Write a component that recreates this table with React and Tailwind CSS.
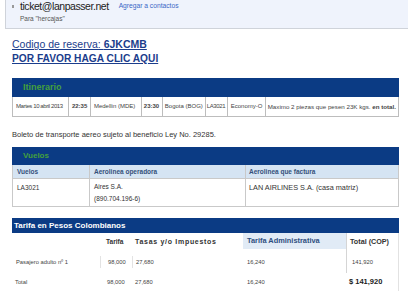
import React from "react";

const itinerario = [
    { text: "Martes 10 abril 2013", w: "w-[56px]", cls: "px-[3px] tracking-[-0.4px]" },
    { text: "22:35", w: "w-[22px]", cls: "px-[3px] font-bold" },
    { text: "Medellin (MDE)", w: "w-[51px]", cls: "px-[3px]" },
    { text: "23:30", w: "w-[21px]", cls: "px-[2px] font-bold" },
    { text: "Bogota (BOG)", w: "w-[43px]", cls: "px-[2px]" },
    { text: "LA3021", w: "w-[22px]", cls: "px-[1px] tracking-[-0.4px]" },
    { text: "Economy-O", w: "w-[38px]", cls: "px-[3px]" },
];

const BlueBar = ({ children, className }) => (
    <div className={`flex items-center bg-[#0b3b84] ${className}`}>{children}</div>
);

const App = () => {
    return (
        <div className="w-[408px] h-[291px] overflow-hidden bg-white text-[#333] font-['Liberation_Sans',Arial,sans-serif]">
            {/* mail header */}
            <div className="ml-[5px] h-[29px] border-l border-b border-[#cfd3da] bg-[#eff3fc] pl-[6px]">
                <div className="flex items-center h-[13px]">
                    <span className="w-[2px] h-[3px] bg-[#999] mr-[6px]" />
                    <span className="text-[10.5px] leading-[13px] tracking-[-0.45px] text-[#222]">ticket@lanpasser.net</span>
                    <span className="ml-[10px] text-[6.7px] text-[#3a67c6]">Agregar a contactos</span>
                </div>
                <div className="pl-[8px] pt-[1px] text-[6.5px] leading-[9px] text-[#555]">Para "hercajas"</div>
            </div>

            <div className="pl-[12px] pr-[9px]">
                <div className="mt-[9px] h-[12px] leading-[12px] text-[10.5px] text-[#1b3d8c] underline">
                    Codigo de reserva: <span className="font-bold">6JKCMB</span>
                </div>
                <div className="mt-[3px] h-[12px] leading-[12px] text-[10.2px] font-bold text-[#1b3d8c] underline">
                    POR FAVOR HAGA CLIC AQUI
                </div>

                {/* itinerario */}
                <BlueBar className="mt-[13px] h-[19px] pl-[11px]">
                    <span className="text-[9px] font-bold text-[#44a03c]">Itinerario</span>
                </BlueBar>
                <div className="flex h-[20px] border-b border-[#bdbdbd] text-[6px] text-[#444]">
                    {itinerario.map((c, i) => (
                        <div key={i} className={`${c.w} flex items-center border-l border-[#bdbdbd] whitespace-nowrap overflow-hidden ${c.cls}`}>
                            {c.text}
                        </div>
                    ))}
                    <div className="flex-1 flex items-center px-[2px] border-l border-r border-[#bdbdbd] whitespace-nowrap text-[6.2px]">
                        Maximo 2 piezas que pesen 23K kgs.&nbsp;<span className="font-bold">en total.</span>
                    </div>
                </div>

                <div className="mt-[12px] h-[12px] leading-[12px] text-[7.5px] text-[#333]">
                    Boleto de transporte aereo sujeto al beneficio Ley No. 29285.
                </div>

                {/* vuelos */}
                <BlueBar className="mt-[6px] h-[18px] pl-[11px]">
                    <span className="text-[8px] font-bold text-[#44a03c]">Vuelos</span>
                </BlueBar>
                <div className="border-l border-r border-b border-[#c9c9c9]">
                    <div className="flex h-[14px] bg-[#d5e4f3] text-[6.5px] font-bold text-[#34507a] border-b border-[#c9c9c9]">
                        <div className="w-[76px] flex items-center pl-[4px]">Vuelos</div>
                        <div className="w-[156px] flex items-center pl-[4px] border-l border-[#c9c9c9]">Aerolinea operadora</div>
                        <div className="flex-1 flex items-center pl-[3px] border-l border-[#c9c9c9]">Aerolinea que factura</div>
                    </div>
                    <div className="flex h-[27px] text-[6.5px] text-[#333]">
                        <div className="w-[76px] pl-[4px] pt-[4px]">LA3021</div>
                        <div className="w-[156px] pl-[4px] pt-[2px] border-l border-[#c9c9c9] leading-[12px]">
                            <div>Aires S.A.</div>
                            <div>(890.704.196-6)</div>
                        </div>
                        <div className="flex-1 pl-[3px] pt-[4px] border-l border-[#c9c9c9] text-[7.3px]">LAN AIRLINES S.A. (casa matriz)</div>
                    </div>
                </div>

                {/* tarifa */}
                <BlueBar className="mt-[11px] h-[15px] pl-[2px]">
                    <span className="text-[8px] font-bold text-white">Tarifa en Pesos Colombianos</span>
                </BlueBar>
                <div className="border-r border-[#e2e2e2] text-[5.8px] text-[#444] whitespace-nowrap">
                    <div className="flex h-[18px] font-bold">
                        <div className="w-[88px]" />
                        <div className="w-[32px] flex items-center pl-[6px] text-[6.6px] text-[#333]">Tarifa</div>
                        <div className="w-[111px] flex items-center pl-[3px] text-[7px] tracking-[0.7px] text-[#333]">Tasas y/o Impuestos</div>
                        <div className="w-[103px] h-[16px] flex items-center pl-[4px] bg-[#e1ebf6] text-[7.4px] text-[#2f4f80]">Tarifa Administrativa</div>
                        <div className="flex-1 flex items-center pl-[3px] border-l border-[#d5d5d5] text-[7.2px] text-[#333]">Total (COP)</div>
                    </div>
                    <div className="flex h-[22px]">
                        <div className="w-[88px] flex items-center pl-[4px]">Pasajero adulto nº 1</div>
                        <div className="w-[32px] flex items-center pl-[7px] border-l border-[#e3e3e3] my-[5px]">98,000</div>
                        <div className="w-[111px] flex items-center pl-[3px] border-l border-[#e3e3e3] my-[5px]">27,680</div>
                        <div className="w-[103px] flex items-center pl-[4px]">16,240</div>
                        <div className="flex-1 flex items-center pl-[5px] border-l border-[#d5d5d5]">141,920</div>
                    </div>
                    <div className="flex h-[18px]">
                        <div className="w-[88px] flex items-center pl-[3px]">Total</div>
                        <div className="w-[32px] flex items-center pl-[7px]">98,000</div>
                        <div className="w-[111px] flex items-center pl-[3px]">27,680</div>
                        <div className="w-[103px] flex items-center pl-[4px]">16,240</div>
                        <div className="flex-1 flex items-center pl-[3px] font-bold text-[7.5px] text-[#222]">$ 141,920</div>
                    </div>
                </div>
            </div>
        </div>
    );
};

export default App;
